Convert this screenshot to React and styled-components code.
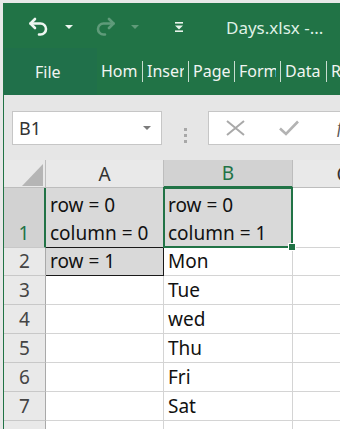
import React from "react";
import styled, { createGlobalStyle } from "styled-components";

const GREEN = "#217346";

const GlobalStyle = createGlobalStyle`
	html, body {
		margin: 0;
		padding: 0;
		background: #e8e8e8;
		overflow: hidden;
	}
	body {
		font-family: "Noto Sans", "Open Sans", sans-serif;
	}
`;

const Outer = styled.div`
	width: 340px;
	height: 429px;
	padding: 3px 0 0 3px;
	box-sizing: border-box;
	overflow: hidden;
`;

const Window = styled.div`
	width: 400px;
	height: 500px;
	border-left: 1px solid ${GREEN};
	background: #e6e6e6;
`;

const TitleBar = styled.div`
	height: 45px;
	background: ${GREEN};
	display: flex;
	align-items: center;
	padding-top: 3px;
	box-sizing: border-box;
`;

const QuickIcon = styled.div`
	display: flex;
	align-items: center;
	margin-left: ${({ $ml }) => $ml}px;
	opacity: ${({ $dim }) => ($dim ? 0.3 : 1)};
`;

const Title = styled.div`
	margin-left: 42px;
	font-size: 17px;
	color: #dff0e5;
	white-space: nowrap;
`;

const TabBar = styled.div`
	height: 47px;
	background: ${GREEN};
	display: flex;
	align-items: center;
	white-space: nowrap;
`;

const FileTab = styled.div`
	width: 93px;
	align-self: stretch;
	display: flex;
	align-items: center;
	padding-left: 31px;
	box-sizing: border-box;
	font-size: 16px;
	color: #f1f5f2;
	background: #20704a;
`;

const Tab = styled.div`
	width: 46px;
	flex-shrink: 0;
	height: 21px;
	padding-left: 4px;
	box-sizing: border-box;
	border-right: 1px solid #c9ddd0;
	display: flex;
	align-items: center;
`;

const TabLabel = styled.span`
	display: block;
	width: 37px;
	overflow: hidden;
	font-size: 16px;
	color: #f1f5f2;
	line-height: 21px;
`;

const FormulaArea = styled.div`
	height: 65px;
	display: flex;
	padding: 16px 0 0 8px;
	box-sizing: border-box;
`;

const NameBox = styled.div`
	width: 150px;
	height: 34px;
	flex-shrink: 0;
	background: #fff;
	border: 1px solid #c6c6c6;
	box-sizing: border-box;
	display: flex;
	align-items: center;
	justify-content: space-between;
	padding: 0 10px 0 6px;
	font-size: 18px;
	color: #333;
`;

const Caret = styled.span`
	width: 0;
	height: 0;
	border-left: 4px solid transparent;
	border-right: 4px solid transparent;
	border-top: 4px solid ${({ $color }) => $color || "#7b7b7b"};
`;

const Grip = styled.div`
	width: 46px;
	flex-shrink: 0;
	display: flex;
	flex-direction: column;
	align-items: center;
	justify-content: center;
	gap: 3px;

	span {
		width: 3px;
		height: 3px;
		background: #a8a8a8;
	}
`;

const FormulaBox = styled.div`
	width: 200px;
	height: 34px;
	flex-shrink: 0;
	background: #fff;
	border: 1px solid #c6c6c6;
	box-sizing: border-box;
	display: flex;
	align-items: center;
	padding-left: 17px;
	gap: 34px;
`;

const Fx = styled.span`
	font-family: "Liberation Serif", serif;
	font-style: italic;
	font-size: 17px;
	color: #555;
	margin-left: 4px;
`;

const Sheet = styled.div`
	display: grid;
	grid-template-columns: 42px 118px 129px 100px;
	grid-template-rows: 28px 60px 28px repeat(6, 29px);
	background: #fff;
	font-size: 19px;
`;

const Corner = styled.div`
	background: #e9e9e9;
	border-right: 1px solid #bdbdbd;
	border-bottom: 1px solid #bdbdbd;
	display: flex;
	align-items: flex-end;
	justify-content: flex-end;
	padding: 0 2px 1px 0;
	box-sizing: border-box;

	&::after {
		content: "";
		width: 21px;
		height: 22px;
		background: #b5b5b5;
		clip-path: polygon(100% 0, 100% 100%, 0 100%);
	}
`;

const ColHead = styled.div`
	background: ${({ $active }) => ($active ? "#d2d2d2" : "#e9e9e9")};
	color: ${({ $active }) => ($active ? GREEN : "#333")};
	border-right: 1px solid #bdbdbd;
	border-bottom: ${({ $active }) =>
		$active ? `2px solid ${GREEN}` : "1px solid #bdbdbd"};
	box-sizing: border-box;
	display: flex;
	align-items: flex-end;
	justify-content: center;
	line-height: 26px;
`;

const RowHead = styled.div`
	background: ${({ $active }) => ($active ? "#d2d2d2" : "#e9e9e9")};
	color: ${({ $active }) => ($active ? GREEN : "#444")};
	border-right: ${({ $active }) =>
		$active ? `2px solid ${GREEN}` : "1px solid #a9a9a9"};
	border-bottom: 1px solid #c8c8c8;
	box-sizing: border-box;
	display: flex;
	align-items: flex-end;
	justify-content: center;
	line-height: 28px;
`;

const Cell = styled.div`
	position: relative;
	z-index: ${({ $selected }) => ($selected ? 2 : "auto")};
	background: ${({ $fill }) => ($fill ? "#d9d9d9" : "#fff")};
	border-right: 1px solid ${({ $darkRight }) => ($darkRight ? "#1a1a1a" : "#d4d4d4")};
	border-bottom: 1px solid ${({ $darkBottom }) => ($darkBottom ? "#1a1a1a" : "#d4d4d4")};
	box-sizing: border-box;
	display: flex;
	flex-direction: column;
	justify-content: flex-end;
	padding: 0 4px;
	line-height: 28px;
	color: #111;
	white-space: nowrap;
	overflow: ${({ $selected }) => ($selected ? "visible" : "hidden")};
`;

const Selection = styled.div`
	position: absolute;
	top: -1px;
	left: -1px;
	right: -1px;
	bottom: -1px;
	border: 2px solid ${GREEN};
	pointer-events: none;

	&::after {
		content: "";
		position: absolute;
		right: -5px;
		bottom: -5px;
		width: 6px;
		height: 6px;
		background: ${GREEN};
		border: 1px solid #fff;
	}
`;

const UndoIcon = ({ color }) => (
	<svg width="24" height="24" viewBox="0 0 24 24" fill="none" stroke={color} strokeWidth="2.6" strokeLinecap="round" strokeLinejoin="round">
		<path d="M8 4 3.5 8.5 8 13" />
		<path d="M3.5 8.5h10a5.5 5.5 0 0 1 0 11H12" />
	</svg>
);

const RedoIcon = ({ color }) => (
	<svg width="24" height="24" viewBox="0 0 24 24" fill="none" stroke={color} strokeWidth="2.6" strokeLinecap="round" strokeLinejoin="round">
		<path d="M16 4l4.5 4.5L16 13" />
		<path d="M20.5 8.5h-10a5.5 5.5 0 0 0 0 11H12" />
	</svg>
);

const CustomizeIcon = () => (
	<svg width="10" height="10" viewBox="0 0 10 10">
		<rect x="1" y="0" width="8" height="1.6" fill="#e8f3ec" />
		<path d="M1 3.5h8L5 7.5z" fill="#e8f3ec" />
		<rect x="1" y="8.4" width="8" height="1.6" fill="#e8f3ec" />
	</svg>
);

const CrossIcon = () => (
	<svg width="19" height="16" viewBox="0 0 19 16" stroke="#a9a9a9" strokeWidth="2">
		<path d="M1 1l17 14M18 1 1 15" />
	</svg>
);

const CheckIcon = () => (
	<svg width="20" height="16" viewBox="0 0 20 16" fill="none" stroke="#b3b3b3" strokeWidth="2.6">
		<path d="M1 8.5l6 5.5L19 1.5" />
	</svg>
);

const tabs = ["Home", "Insert", "Page Layout", "Formulas", "Data", "Review"];

const days = ["Tue", "wed", "Thu", "Fri", "Sat"];

const App = () => {
	return (
		<Outer>
			<GlobalStyle />
			<Window>
				<TitleBar>
					<QuickIcon $ml={23}>
						<UndoIcon color="#eef7f1" />
					</QuickIcon>
					<QuickIcon $ml={14}>
						<Caret $color="#eef7f1" />
					</QuickIcon>
					<QuickIcon $ml={20} $dim>
						<RedoIcon color="#eef7f1" />
					</QuickIcon>
					<QuickIcon $ml={14} $dim>
						<Caret $color="#eef7f1" />
					</QuickIcon>
					<QuickIcon $ml={35}>
						<CustomizeIcon />
					</QuickIcon>
					<Title>Days.xlsx -...</Title>
				</TitleBar>
				<TabBar>
					<FileTab>File</FileTab>
					{tabs.map((t) => (
						<Tab key={t}>
							<TabLabel>{t}</TabLabel>
						</Tab>
					))}
				</TabBar>
				<FormulaArea>
					<NameBox>
						B1
						<Caret />
					</NameBox>
					<Grip>
						<span />
						<span />
						<span />
					</Grip>
					<FormulaBox>
						<CrossIcon />
						<CheckIcon />
						<Fx>fx</Fx>
					</FormulaBox>
				</FormulaArea>
				<Sheet>
					<Corner />
					<ColHead>A</ColHead>
					<ColHead $active>B</ColHead>
					<ColHead>C</ColHead>

					<RowHead $active>1</RowHead>
					<Cell $fill $darkBottom>
						<span>row = 0</span>
						<span>column = 0</span>
					</Cell>
					<Cell $fill $selected>
						<span>row = 0</span>
						<span>column = 1</span>
						<Selection />
					</Cell>
					<Cell />

					<RowHead>2</RowHead>
					<Cell $fill $darkRight $darkBottom>
						row = 1
					</Cell>
					<Cell>Mon</Cell>
					<Cell />

					{days.map((d, i) => (
						<React.Fragment key={d}>
							<RowHead>{i + 3}</RowHead>
							<Cell />
							<Cell>{d}</Cell>
							<Cell />
						</React.Fragment>
					))}
					<RowHead />
					<Cell />
					<Cell />
					<Cell />
				</Sheet>
			</Window>
		</Outer>
	);
};

export default App;
